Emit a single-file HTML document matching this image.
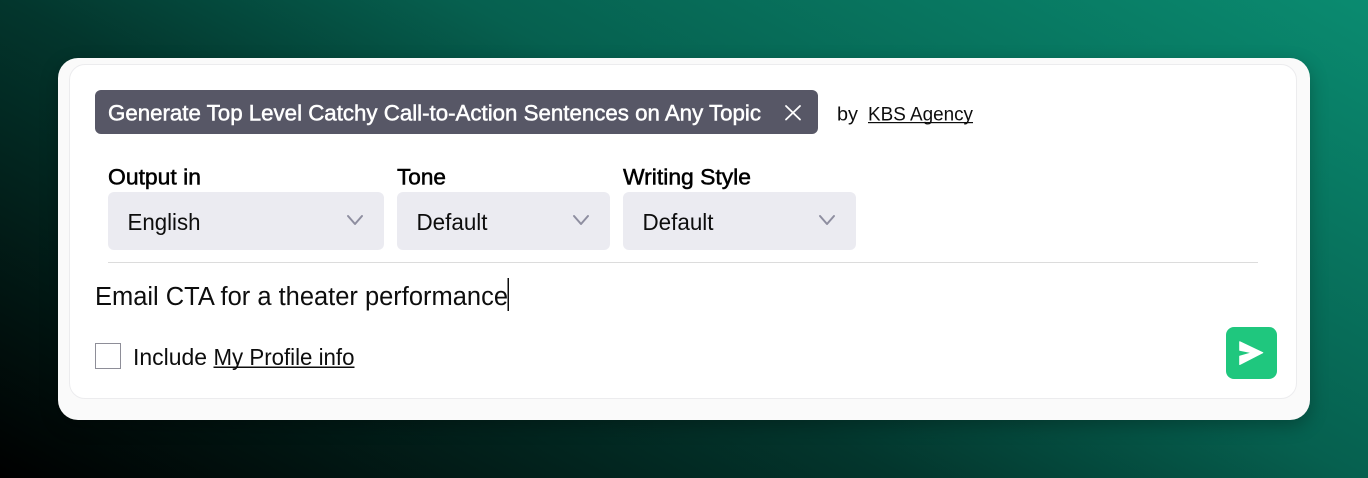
<!DOCTYPE html>
<html>
<head>
<meta charset="utf-8">
<style>
html,body{margin:0;padding:0;width:1368px;height:478px;overflow:hidden;background:#000}
.bg{position:absolute;left:0;top:0;width:1368px;height:478px;
 background:linear-gradient(28deg,#000000 0%,#03362d 40%,#06604f 60%,#0a8b70 100%);}
.card{position:absolute;left:58px;top:58px;width:1252px;height:362px;border-radius:20px;background:#fafafa;box-shadow:0 6px 18px rgba(0,0,0,.28)}
.inner{position:absolute;left:69px;top:64px;width:1226px;height:333px;border-radius:16px;background:#fff;border:1px solid #ececee}
svg{position:absolute;left:0;top:0}
text{font-family:"Liberation Sans",sans-serif}
</style>
</head>
<body>
<div class="bg"></div>
<div class="card"></div>
<div class="inner"></div>
<svg width="1368" height="478" viewBox="0 0 1368 478" xmlns="http://www.w3.org/2000/svg">
  <rect x="95" y="90" width="723" height="44" rx="6" fill="#575766"/>
  <text x="108" y="120.500" font-size="22.500" fill="#fff" stroke="#fff" stroke-width=".5" textLength="653" lengthAdjust="spacingAndGlyphs">Generate Top Level Catchy Call-to-Action Sentences on Any Topic</text>
  <path d="M786 106 L800 119.500 M800 106 L786 119.500" stroke="#fff" stroke-width="1.800" fill="none" stroke-linecap="round"/>
  <text x="837" y="120.700" font-size="19" fill="#0d0d0d" textLength="21" lengthAdjust="spacingAndGlyphs">by</text>
  <text x="868" y="120.700" font-size="19" fill="#0d0d0d" textLength="105" lengthAdjust="spacingAndGlyphs">KBS Agency</text>
  <rect x="868" y="122" width="105" height="1.200" fill="#0d0d0d"/>

  <text x="108" y="184.500" font-size="22" fill="#000" stroke="#000" stroke-width=".5" textLength="93" lengthAdjust="spacingAndGlyphs">Output in</text>
  <text x="397" y="184.500" font-size="22" fill="#000" stroke="#000" stroke-width=".5" textLength="49" lengthAdjust="spacingAndGlyphs">Tone</text>
  <text x="623" y="184.500" font-size="22" fill="#000" stroke="#000" stroke-width=".5" textLength="128" lengthAdjust="spacingAndGlyphs">Writing Style</text>

  <rect x="108" y="192" width="276" height="58" rx="6" fill="#ebebf1"/>
  <rect x="397" y="192" width="213" height="58" rx="6" fill="#ebebf1"/>
  <rect x="623" y="192" width="233" height="58" rx="6" fill="#ebebf1"/>
  <text x="127.500" y="230" font-size="23.500" fill="#0d0d0d" textLength="73" lengthAdjust="spacingAndGlyphs">English</text>
  <text x="416.500" y="230" font-size="23.500" fill="#0d0d0d" textLength="71" lengthAdjust="spacingAndGlyphs">Default</text>
  <text x="642.500" y="230" font-size="23.500" fill="#0d0d0d" textLength="71" lengthAdjust="spacingAndGlyphs">Default</text>
  <g stroke="#8e8ea0" stroke-width="2" fill="none" stroke-linecap="round" stroke-linejoin="round">
    <path d="M348 216 L355 224 L362 216"/>
    <path d="M574 216 L581 224 L588 216"/>
    <path d="M820 216 L827 224 L834 216"/>
  </g>
  <rect x="108" y="262" width="1150" height="1" fill="#dcdcdc"/>

  <text x="95" y="305" font-size="25.500" fill="#0d0d0d" textLength="413" lengthAdjust="spacingAndGlyphs">Email CTA for a theater performance</text>
  <rect x="507.500" y="278" width="1.500" height="33" fill="#0d0d0d"/>

  <rect x="95.500" y="343.500" width="25" height="25" fill="#fff" stroke="#8e8e98" stroke-width="1"/>
  <text x="133" y="365" font-size="23.500" fill="#0d0d0d" textLength="74" lengthAdjust="spacingAndGlyphs">Include</text>
  <text x="213.500" y="365" font-size="23.500" fill="#0d0d0d" textLength="141" lengthAdjust="spacingAndGlyphs">My Profile info</text>
  <rect x="213.500" y="366.500" width="141" height="1.500" fill="#0d0d0d"/>

  <rect x="1226" y="327" width="51" height="52" rx="8" fill="#1fc77e"/>
  <path d="M1239.700 341.700 L1262.800 352.700 L1239.700 364.500 L1239.700 356.200 L1252 352.700 L1239.700 350.200 Z" fill="#fff" stroke="#fff" stroke-width="1" stroke-linejoin="round"/>
</svg>
</body>
</html>
